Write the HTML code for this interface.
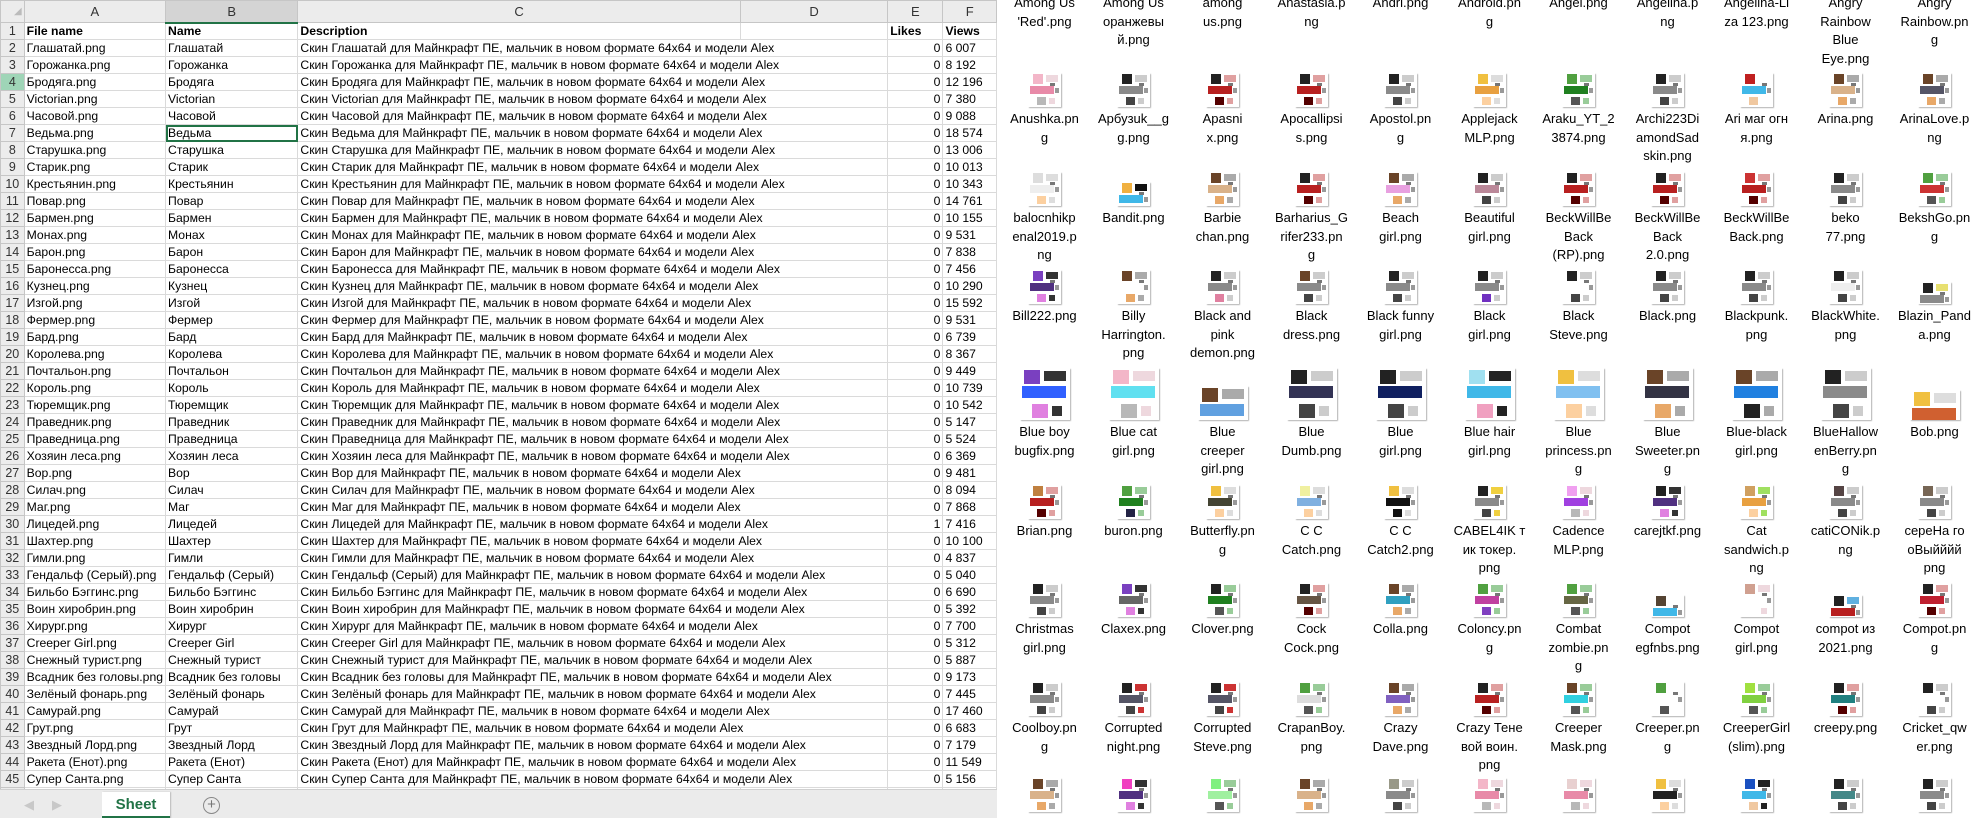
<!DOCTYPE html>
<html><head><meta charset="utf-8">
<style>
*{margin:0;padding:0;box-sizing:border-box}
body{width:1971px;height:818px;overflow:hidden;background:#fff;position:relative;font-family:"Liberation Sans","DejaVu Sans",sans-serif}
#xl{position:absolute;left:0;top:0;width:997px;height:818px;overflow:hidden;background:#fff}
table{border-collapse:collapse;table-layout:fixed;position:absolute;left:0;top:0}
td{border:1px solid #dadada;height:17px;padding:0 2px;white-space:nowrap;overflow:hidden;font-size:12.2px;line-height:15px;color:#000}
tr.h td{height:22px;background:#ececec;border-color:#c6c6c6;text-align:center;color:#333;font-size:13px}
tr.h td.sel{background:#d4d4d4;border-bottom:2px solid #217346}
td.r{background:#ececec;border-color:#c6c6c6;text-align:center;color:#333;padding:0;font-size:12.5px}
td.rs{background:#9fd5b7}
td.n{text-align:right}
tr.b td{font-weight:bold}
td.cur{outline:2px solid #217346;outline-offset:-2px}
#tabs{position:absolute;left:0;top:789px;width:997px;height:29px;background:#ebebeb;border-top:1px solid #d0d0d0}
#tab{position:absolute;left:102px;top:2px;width:68px;height:27px;background:#fff;border-bottom:3px solid #217346;color:#217346;font-weight:bold;font-size:15px;text-align:center;line-height:25px;box-shadow:1px 0 1px #bbb}
#plus{position:absolute;left:203px;top:7px;width:17px;height:17px;border:1.5px solid #888;border-radius:50%;color:#777;font-size:15px;line-height:14px;text-align:center}
.arr{position:absolute;top:7px;color:#c8c8c8;font-size:13px}
#ex{position:absolute;left:1000px;top:0;width:971px;height:818px;overflow:hidden}
.row{position:absolute;left:0;white-space:nowrap}
.cell{display:inline-block;width:89px;vertical-align:top;text-align:center;position:relative}
.ta{height:34px;position:relative}
.t{position:absolute;left:28px;bottom:0;width:33px;height:34px;box-shadow:1px 1px 1px #b5b5b5;
background:linear-gradient(var(--a),var(--a)) 5px 1px/10px 10px no-repeat,
linear-gradient(var(--d),var(--d)) 18px 2px/12px 7px no-repeat,
linear-gradient(#777,#777) 22px 10px/5px 3px no-repeat,
linear-gradient(var(--b),var(--b)) 2px 13px/24px 8px no-repeat,
linear-gradient(#999,#999) 27px 15px/4px 5px no-repeat,
linear-gradient(var(--c),var(--c)) 9px 24px/9px 8px no-repeat,
linear-gradient(var(--d),var(--d)) 21px 25px/6px 6px no-repeat,#fff}
.big .ta{height:53px}
.big .t{width:50px;height:52px;left:20px;
background:linear-gradient(var(--a),var(--a)) 4px 2px/16px 14px no-repeat,
linear-gradient(var(--d),var(--d)) 24px 3px/22px 10px no-repeat,
linear-gradient(var(--b),var(--b)) 2px 18px/44px 12px no-repeat,
linear-gradient(var(--c),var(--c)) 12px 36px/16px 14px no-repeat,
linear-gradient(var(--d),var(--d)) 32px 38px/10px 10px no-repeat,#fff}
.tx{font-size:13px;line-height:18.7px;color:#000;margin-top:3px}
.c1{--a:#f3b6c8;--b:#e88aa8;--c:#b8b8b8;--d:#eed8de}
.c2{--a:#222;--b:#8a8a8a;--c:#444;--d:#ccc}
.c3{--a:#6a4428;--b:#d9b28a;--c:#e8a868;--d:#aaa}
.c4{--a:#222;--b:#b82020;--c:#500;--d:#e0a0a0}
.c5{--a:#1a50c0;--b:#40b8e8;--c:#f0c8a0;--d:#222}
.c6{--a:#50a040;--b:#208020;--c:#555;--d:#9c9}
.c7{--a:#7a40c0;--b:#503080;--c:#e080e0;--d:#333}
.c8{--a:#f0c040;--b:#e8a040;--c:#fcd0a0;--d:#ddd}
</style></head><body>
<div id="xl">
<table>
<colgroup><col style="width:24px"><col style="width:138px"><col style="width:133px"><col style="width:444px"><col style="width:148px"><col style="width:56px"><col style="width:54px"></colgroup>
<tr class="h"><td style="color:#bbb;font-size:10px;text-align:right">◢</td><td>A</td><td class="sel">B</td><td>C</td><td>D</td><td>E</td><td>F</td></tr>
<tr class="b"><td class="r" style="font-weight:normal">1</td><td>File name</td><td>Name</td><td>Description</td><td></td><td>Likes</td><td>Views</td></tr>
<tr><td class="r">2</td><td>Глашатай.png</td><td>Глашатай</td><td colspan="2">Скин Глашатай для Майнкрафт ПЕ, мальчик в новом формате 64x64 и модели Alex</td><td class="n">0</td><td>6 007</td></tr>
<tr><td class="r">3</td><td>Горожанка.png</td><td>Горожанка</td><td colspan="2">Скин Горожанка для Майнкрафт ПЕ, мальчик в новом формате 64x64 и модели Alex</td><td class="n">0</td><td>8 192</td></tr>
<tr><td class="r rs">4</td><td>Бродяга.png</td><td>Бродяга</td><td colspan="2">Скин Бродяга для Майнкрафт ПЕ, мальчик в новом формате 64x64 и модели Alex</td><td class="n">0</td><td>12 196</td></tr>
<tr><td class="r">5</td><td>Victorian.png</td><td>Victorian</td><td colspan="2">Скин Victorian для Майнкрафт ПЕ, мальчик в новом формате 64x64 и модели Alex</td><td class="n">0</td><td>7 380</td></tr>
<tr><td class="r">6</td><td>Часовой.png</td><td>Часовой</td><td colspan="2">Скин Часовой для Майнкрафт ПЕ, мальчик в новом формате 64x64 и модели Alex</td><td class="n">0</td><td>9 088</td></tr>
<tr><td class="r">7</td><td>Ведьма.png</td><td class="cur">Ведьма</td><td colspan="2">Скин Ведьма для Майнкрафт ПЕ, мальчик в новом формате 64x64 и модели Alex</td><td class="n">0</td><td>18 574</td></tr>
<tr><td class="r">8</td><td>Старушка.png</td><td>Старушка</td><td colspan="2">Скин Старушка для Майнкрафт ПЕ, мальчик в новом формате 64x64 и модели Alex</td><td class="n">0</td><td>13 006</td></tr>
<tr><td class="r">9</td><td>Старик.png</td><td>Старик</td><td colspan="2">Скин Старик для Майнкрафт ПЕ, мальчик в новом формате 64x64 и модели Alex</td><td class="n">0</td><td>10 013</td></tr>
<tr><td class="r">10</td><td>Крестьянин.png</td><td>Крестьянин</td><td colspan="2">Скин Крестьянин для Майнкрафт ПЕ, мальчик в новом формате 64x64 и модели Alex</td><td class="n">0</td><td>10 343</td></tr>
<tr><td class="r">11</td><td>Повар.png</td><td>Повар</td><td colspan="2">Скин Повар для Майнкрафт ПЕ, мальчик в новом формате 64x64 и модели Alex</td><td class="n">0</td><td>14 761</td></tr>
<tr><td class="r">12</td><td>Бармен.png</td><td>Бармен</td><td colspan="2">Скин Бармен для Майнкрафт ПЕ, мальчик в новом формате 64x64 и модели Alex</td><td class="n">0</td><td>10 155</td></tr>
<tr><td class="r">13</td><td>Монах.png</td><td>Монах</td><td colspan="2">Скин Монах для Майнкрафт ПЕ, мальчик в новом формате 64x64 и модели Alex</td><td class="n">0</td><td>9 531</td></tr>
<tr><td class="r">14</td><td>Барон.png</td><td>Барон</td><td colspan="2">Скин Барон для Майнкрафт ПЕ, мальчик в новом формате 64x64 и модели Alex</td><td class="n">0</td><td>7 838</td></tr>
<tr><td class="r">15</td><td>Баронесса.png</td><td>Баронесса</td><td colspan="2">Скин Баронесса для Майнкрафт ПЕ, мальчик в новом формате 64x64 и модели Alex</td><td class="n">0</td><td>7 456</td></tr>
<tr><td class="r">16</td><td>Кузнец.png</td><td>Кузнец</td><td colspan="2">Скин Кузнец для Майнкрафт ПЕ, мальчик в новом формате 64x64 и модели Alex</td><td class="n">0</td><td>10 290</td></tr>
<tr><td class="r">17</td><td>Изгой.png</td><td>Изгой</td><td colspan="2">Скин Изгой для Майнкрафт ПЕ, мальчик в новом формате 64x64 и модели Alex</td><td class="n">0</td><td>15 592</td></tr>
<tr><td class="r">18</td><td>Фермер.png</td><td>Фермер</td><td colspan="2">Скин Фермер для Майнкрафт ПЕ, мальчик в новом формате 64x64 и модели Alex</td><td class="n">0</td><td>9 531</td></tr>
<tr><td class="r">19</td><td>Бард.png</td><td>Бард</td><td colspan="2">Скин Бард для Майнкрафт ПЕ, мальчик в новом формате 64x64 и модели Alex</td><td class="n">0</td><td>6 739</td></tr>
<tr><td class="r">20</td><td>Королева.png</td><td>Королева</td><td colspan="2">Скин Королева для Майнкрафт ПЕ, мальчик в новом формате 64x64 и модели Alex</td><td class="n">0</td><td>8 367</td></tr>
<tr><td class="r">21</td><td>Почтальон.png</td><td>Почтальон</td><td colspan="2">Скин Почтальон для Майнкрафт ПЕ, мальчик в новом формате 64x64 и модели Alex</td><td class="n">0</td><td>9 449</td></tr>
<tr><td class="r">22</td><td>Король.png</td><td>Король</td><td colspan="2">Скин Король для Майнкрафт ПЕ, мальчик в новом формате 64x64 и модели Alex</td><td class="n">0</td><td>10 739</td></tr>
<tr><td class="r">23</td><td>Тюремщик.png</td><td>Тюремщик</td><td colspan="2">Скин Тюремщик для Майнкрафт ПЕ, мальчик в новом формате 64x64 и модели Alex</td><td class="n">0</td><td>10 542</td></tr>
<tr><td class="r">24</td><td>Праведник.png</td><td>Праведник</td><td colspan="2">Скин Праведник для Майнкрафт ПЕ, мальчик в новом формате 64x64 и модели Alex</td><td class="n">0</td><td>5 147</td></tr>
<tr><td class="r">25</td><td>Праведница.png</td><td>Праведница</td><td colspan="2">Скин Праведница для Майнкрафт ПЕ, мальчик в новом формате 64x64 и модели Alex</td><td class="n">0</td><td>5 524</td></tr>
<tr><td class="r">26</td><td>Хозяин леса.png</td><td>Хозяин леса</td><td colspan="2">Скин Хозяин леса для Майнкрафт ПЕ, мальчик в новом формате 64x64 и модели Alex</td><td class="n">0</td><td>6 369</td></tr>
<tr><td class="r">27</td><td>Вор.png</td><td>Вор</td><td colspan="2">Скин Вор для Майнкрафт ПЕ, мальчик в новом формате 64x64 и модели Alex</td><td class="n">0</td><td>9 481</td></tr>
<tr><td class="r">28</td><td>Силач.png</td><td>Силач</td><td colspan="2">Скин Силач для Майнкрафт ПЕ, мальчик в новом формате 64x64 и модели Alex</td><td class="n">0</td><td>8 094</td></tr>
<tr><td class="r">29</td><td>Маг.png</td><td>Маг</td><td colspan="2">Скин Маг для Майнкрафт ПЕ, мальчик в новом формате 64x64 и модели Alex</td><td class="n">0</td><td>7 868</td></tr>
<tr><td class="r">30</td><td>Лицедей.png</td><td>Лицедей</td><td colspan="2">Скин Лицедей для Майнкрафт ПЕ, мальчик в новом формате 64x64 и модели Alex</td><td class="n">1</td><td>7 416</td></tr>
<tr><td class="r">31</td><td>Шахтер.png</td><td>Шахтер</td><td colspan="2">Скин Шахтер для Майнкрафт ПЕ, мальчик в новом формате 64x64 и модели Alex</td><td class="n">0</td><td>10 100</td></tr>
<tr><td class="r">32</td><td>Гимли.png</td><td>Гимли</td><td colspan="2">Скин Гимли для Майнкрафт ПЕ, мальчик в новом формате 64x64 и модели Alex</td><td class="n">0</td><td>4 837</td></tr>
<tr><td class="r">33</td><td>Гендальф (Серый).png</td><td>Гендальф (Серый)</td><td colspan="2">Скин Гендальф (Серый) для Майнкрафт ПЕ, мальчик в новом формате 64x64 и модели Alex</td><td class="n">0</td><td>5 040</td></tr>
<tr><td class="r">34</td><td>Бильбо Бэггинс.png</td><td>Бильбо Бэггинс</td><td colspan="2">Скин Бильбо Бэггинс для Майнкрафт ПЕ, мальчик в новом формате 64x64 и модели Alex</td><td class="n">0</td><td>6 690</td></tr>
<tr><td class="r">35</td><td>Воин хиробрин.png</td><td>Воин хиробрин</td><td colspan="2">Скин Воин хиробрин для Майнкрафт ПЕ, мальчик в новом формате 64x64 и модели Alex</td><td class="n">0</td><td>5 392</td></tr>
<tr><td class="r">36</td><td>Хирург.png</td><td>Хирург</td><td colspan="2">Скин Хирург для Майнкрафт ПЕ, мальчик в новом формате 64x64 и модели Alex</td><td class="n">0</td><td>7 700</td></tr>
<tr><td class="r">37</td><td>Creeper Girl.png</td><td>Creeper Girl</td><td colspan="2">Скин Creeper Girl для Майнкрафт ПЕ, мальчик в новом формате 64x64 и модели Alex</td><td class="n">0</td><td>5 312</td></tr>
<tr><td class="r">38</td><td>Снежный турист.png</td><td>Снежный турист</td><td colspan="2">Скин Снежный турист для Майнкрафт ПЕ, мальчик в новом формате 64x64 и модели Alex</td><td class="n">0</td><td>5 887</td></tr>
<tr><td class="r">39</td><td>Всадник без головы.png</td><td>Всадник без головы</td><td colspan="2">Скин Всадник без головы для Майнкрафт ПЕ, мальчик в новом формате 64x64 и модели Alex</td><td class="n">0</td><td>9 173</td></tr>
<tr><td class="r">40</td><td>Зелёный фонарь.png</td><td>Зелёный фонарь</td><td colspan="2">Скин Зелёный фонарь для Майнкрафт ПЕ, мальчик в новом формате 64x64 и модели Alex</td><td class="n">0</td><td>7 445</td></tr>
<tr><td class="r">41</td><td>Самурай.png</td><td>Самурай</td><td colspan="2">Скин Самурай для Майнкрафт ПЕ, мальчик в новом формате 64x64 и модели Alex</td><td class="n">0</td><td>17 460</td></tr>
<tr><td class="r">42</td><td>Грут.png</td><td>Грут</td><td colspan="2">Скин Грут для Майнкрафт ПЕ, мальчик в новом формате 64x64 и модели Alex</td><td class="n">0</td><td>6 683</td></tr>
<tr><td class="r">43</td><td>Звездный Лорд.png</td><td>Звездный Лорд</td><td colspan="2">Скин Звездный Лорд для Майнкрафт ПЕ, мальчик в новом формате 64x64 и модели Alex</td><td class="n">0</td><td>7 179</td></tr>
<tr><td class="r">44</td><td>Ракета (Енот).png</td><td>Ракета (Енот)</td><td colspan="2">Скин Ракета (Енот) для Майнкрафт ПЕ, мальчик в новом формате 64x64 и модели Alex</td><td class="n">0</td><td>11 549</td></tr>
<tr><td class="r">45</td><td>Супер Санта.png</td><td>Супер Санта</td><td colspan="2">Скин Супер Санта для Майнкрафт ПЕ, мальчик в новом формате 64x64 и модели Alex</td><td class="n">0</td><td>5 156</td></tr>
<tr><td class="r"></td><td></td><td></td><td></td><td></td><td></td><td></td></tr>
</table>
<div id="tabs"><span class="arr" style="left:24px">◀</span><span class="arr" style="left:52px">▶</span><div id="tab">Sheet</div><div id="plus">+</div></div>
</div>

<div id="ex">
<div class="row" style="top:-43px">
<div class="cell"><div class="ta"></div><div class="tx">Among Us<br>'Red'.png</div></div><div class="cell"><div class="ta"></div><div class="tx">Among Us<br>оранжевы<br>й.png</div></div><div class="cell"><div class="ta"></div><div class="tx">among<br>us.png</div></div><div class="cell"><div class="ta"></div><div class="tx">Anastasia.p<br>ng</div></div><div class="cell"><div class="ta"></div><div class="tx">Andri.png</div></div><div class="cell"><div class="ta"></div><div class="tx">Android.pn<br>g</div></div><div class="cell"><div class="ta"></div><div class="tx">Angel.png</div></div><div class="cell"><div class="ta"></div><div class="tx">Angelina.p<br>ng</div></div><div class="cell"><div class="ta"></div><div class="tx">Angelina-Li<br>za 123.png</div></div><div class="cell"><div class="ta"></div><div class="tx">Angry<br>Rainbow<br>Blue<br>Eye.png</div></div><div class="cell"><div class="ta"></div><div class="tx">Angry<br>Rainbow.pn<br>g</div></div>
</div>
<div class="row" style="top:73px">
<div class="cell"><div class="ta"><div class="t c1"></div></div><div class="tx">Anushka.pn<br>g</div></div><div class="cell"><div class="ta"><div class="t c2"></div></div><div class="tx">Арбузuk__g<br>g.png</div></div><div class="cell"><div class="ta"><div class="t c4"></div></div><div class="tx">Apasni<br>x.png</div></div><div class="cell"><div class="ta"><div class="t c4"></div></div><div class="tx">Apocallipsi<br>s.png</div></div><div class="cell"><div class="ta"><div class="t c2"></div></div><div class="tx">Apostol.pn<br>g</div></div><div class="cell"><div class="ta"><div class="t c8"></div></div><div class="tx">Applejack<br>MLP.png</div></div><div class="cell"><div class="ta"><div class="t c6"></div></div><div class="tx">Araku_YT_2<br>3874.png</div></div><div class="cell"><div class="ta"><div class="t c2"></div></div><div class="tx">Archi223Di<br>amondSad<br>skin.png</div></div><div class="cell"><div class="ta"><div class="t c5" style="--a:#c02020;--d:#fff"></div></div><div class="tx">Ari маг огн<br>я.png</div></div><div class="cell"><div class="ta"><div class="t c3"></div></div><div class="tx">Arina.png</div></div><div class="cell"><div class="ta"><div class="t c3" style="--b:#556"></div></div><div class="tx">ArinaLove.p<br>ng</div></div>
</div>
<div class="row" style="top:172px">
<div class="cell"><div class="ta"><div class="t c8" style="--a:#ddd;--b:#eee"></div></div><div class="tx">balocnhikp<br>enal2019.p<br>ng</div></div><div class="cell"><div class="ta"><div class="t c5" style="--a:#f0b040;--d:#111;height:24px"></div></div><div class="tx">Bandit.png</div></div><div class="cell"><div class="ta"><div class="t c3"></div></div><div class="tx">Barbie<br>chan.png</div></div><div class="cell"><div class="ta"><div class="t c4"></div></div><div class="tx">Barharius_G<br>rifer233.pn<br>g</div></div><div class="cell"><div class="ta"><div class="t c3" style="--b:#e8a0e0"></div></div><div class="tx">Beach<br>girl.png</div></div><div class="cell"><div class="ta"><div class="t c2" style="--b:#b89"></div></div><div class="tx">Beautiful<br>girl.png</div></div><div class="cell"><div class="ta"><div class="t c4"></div></div><div class="tx">BeckWillBe<br>Back<br>(RP).png</div></div><div class="cell"><div class="ta"><div class="t c4"></div></div><div class="tx">BeckWillBe<br>Back<br>2.0.png</div></div><div class="cell"><div class="ta"><div class="t c4" style="--a:#c33"></div></div><div class="tx">BeckWillBe<br>Back.png</div></div><div class="cell"><div class="ta"><div class="t c2"></div></div><div class="tx">beko<br>77.png</div></div><div class="cell"><div class="ta"><div class="t c6" style="--b:#c33"></div></div><div class="tx">BekshGo.pn<br>g</div></div>
</div>
<div class="row" style="top:270px">
<div class="cell"><div class="ta"><div class="t c7"></div></div><div class="tx">Bill222.png</div></div><div class="cell"><div class="ta"><div class="t c3" style="--b:#fff"></div></div><div class="tx">Billy<br>Harrington.<br>png</div></div><div class="cell"><div class="ta"><div class="t c2" style="--c:#e080a0"></div></div><div class="tx">Black and<br>pink<br>demon.png</div></div><div class="cell"><div class="ta"><div class="t c2" style="--a:#6a4428"></div></div><div class="tx">Black<br>dress.png</div></div><div class="cell"><div class="ta"><div class="t c2"></div></div><div class="tx">Black funny<br>girl.png</div></div><div class="cell"><div class="ta"><div class="t c2" style="--c:#7030c0"></div></div><div class="tx">Black<br>girl.png</div></div><div class="cell"><div class="ta"><div class="t c2" style="--b:#fff"></div></div><div class="tx">Black<br>Steve.png</div></div><div class="cell"><div class="ta"><div class="t c2"></div></div><div class="tx">Black.png</div></div><div class="cell"><div class="ta"><div class="t c2"></div></div><div class="tx">Blackpunk.<br>png</div></div><div class="cell"><div class="ta"><div class="t c2" style="--b:#eee"></div></div><div class="tx">BlackWhite.<br>png</div></div><div class="cell"><div class="ta"><div class="t c2" style="--d:#e8e070;height:22px"></div></div><div class="tx">Blazin_Pand<br>a.png</div></div>
</div>
<div class="row big" style="top:367px">
<div class="cell"><div class="ta"><div class="t c7" style="--b:#3060ff"></div></div><div class="tx">Blue boy<br>bugfix.png</div></div><div class="cell"><div class="ta"><div class="t c1" style="--b:#60e0f0"></div></div><div class="tx">Blue cat<br>girl.png</div></div><div class="cell"><div class="ta"><div class="t c3" style="--b:#60a0e0;height:34px"></div></div><div class="tx">Blue<br>creeper<br>girl.png</div></div><div class="cell"><div class="ta"><div class="t c2" style="--b:#335"></div></div><div class="tx">Blue<br>Dumb.png</div></div><div class="cell"><div class="ta"><div class="t c2" style="--b:#102060"></div></div><div class="tx">Blue<br>girl.png</div></div><div class="cell"><div class="ta"><div class="t c5" style="--a:#a0e0f0;--c:#f0a0c0"></div></div><div class="tx">Blue hair<br>girl.png</div></div><div class="cell"><div class="ta"><div class="t c8" style="--b:#80c0f0"></div></div><div class="tx">Blue<br>princess.pn<br>g</div></div><div class="cell"><div class="ta"><div class="t c3" style="--b:#334"></div></div><div class="tx">Blue<br>Sweeter.pn<br>g</div></div><div class="cell"><div class="ta"><div class="t c3" style="--b:#2080e0;--c:#222"></div></div><div class="tx">Blue-black<br>girl.png</div></div><div class="cell"><div class="ta"><div class="t c2"></div></div><div class="tx">BlueHallow<br>enBerry.pn<br>g</div></div><div class="cell"><div class="ta"><div class="t c8" style="--b:#d06030;--c:#3080d0;height:30px"></div></div><div class="tx">Bob.png</div></div>
</div>
<div class="row" style="top:485px">
<div class="cell"><div class="ta"><div class="t c4" style="--a:#c08040"></div></div><div class="tx">Brian.png</div></div><div class="cell"><div class="ta"><div class="t c6" style="--c:#224"></div></div><div class="tx">buron.png</div></div><div class="cell"><div class="ta"><div class="t c8" style="--b:#443"></div></div><div class="tx">Butterfly.pn<br>g</div></div><div class="cell"><div class="ta"><div class="t c8" style="--a:#f0f0a0;--b:#80b0e0"></div></div><div class="tx">C C<br>Catch.png</div></div><div class="cell"><div class="ta"><div class="t c8" style="--b:#111;--c:#111"></div></div><div class="tx">C C<br>Catch2.png</div></div><div class="cell"><div class="ta"><div class="t c2" style="--d:#f0d040"></div></div><div class="tx">CABEL4IK т<br>ик токер.<br>png</div></div><div class="cell"><div class="ta"><div class="t c1" style="--a:#f0a0f0;--b:#a040e0"></div></div><div class="tx">Cadence<br>MLP.png</div></div><div class="cell"><div class="ta"><div class="t c7" style="--a:#222"></div></div><div class="tx">carejtkf.png</div></div><div class="cell"><div class="ta"><div class="t c8" style="--a:#d0a060;--d:#a0e060"></div></div><div class="tx">Cat<br>sandwich.p<br>ng</div></div><div class="cell"><div class="ta"><div class="t c2" style="--a:#544"></div></div><div class="tx">catiCONik.p<br>ng</div></div><div class="cell"><div class="ta"><div class="t c2" style="--a:#765"></div></div><div class="tx">сереНа го<br>оВыйййй<br>png</div></div>
</div>
<div class="row" style="top:583px">
<div class="cell"><div class="ta"><div class="t c2"></div></div><div class="tx">Christmas<br>girl.png</div></div><div class="cell"><div class="ta"><div class="t c7" style="--b:#666"></div></div><div class="tx">Claxex.png</div></div><div class="cell"><div class="ta"><div class="t c6" style="--a:#222"></div></div><div class="tx">Clover.png</div></div><div class="cell"><div class="ta"><div class="t c4" style="--b:#654"></div></div><div class="tx">Cock<br>Cock.png</div></div><div class="cell"><div class="ta"><div class="t c3" style="--b:#30a0c0"></div></div><div class="tx">Colla.png</div></div><div class="cell"><div class="ta"><div class="t c6" style="--b:#c040a0;--c:#8040c0"></div></div><div class="tx">Coloncy.pn<br>g</div></div><div class="cell"><div class="ta"><div class="t c6" style="--b:#664"></div></div><div class="tx">Combat<br>zombie.pn<br>g</div></div><div class="cell"><div class="ta"><div class="t c5" style="--a:#543;--d:#fff;height:22px"></div></div><div class="tx">Compot<br>egfnbs.png</div></div><div class="cell"><div class="ta"><div class="t c1" style="--a:#d0a090;--b:#fff;--c:#fff"></div></div><div class="tx">Compot<br>girl.png</div></div><div class="cell"><div class="ta"><div class="t c4" style="--d:#60b0e0;height:22px"></div></div><div class="tx">compot из<br>2021.png</div></div><div class="cell"><div class="ta"><div class="t c4" style="--b:#c02030"></div></div><div class="tx">Compot.pn<br>g</div></div>
</div>
<div class="row" style="top:682px">
<div class="cell"><div class="ta"><div class="t c2"></div></div><div class="tx">Coolboy.pn<br>g</div></div><div class="cell"><div class="ta"><div class="t c2" style="--b:#556;--d:#c33"></div></div><div class="tx">Corrupted<br>night.png</div></div><div class="cell"><div class="ta"><div class="t c2" style="--b:#556;--d:#c33"></div></div><div class="tx">Corrupted<br>Steve.png</div></div><div class="cell"><div class="ta"><div class="t c6" style="--b:#ddd"></div></div><div class="tx">CrapanBoy.<br>png</div></div><div class="cell"><div class="ta"><div class="t c3" style="--b:#8060c0"></div></div><div class="tx">Crazy<br>Dave.png</div></div><div class="cell"><div class="ta"><div class="t c4"></div></div><div class="tx">Crazy Тене<br>вой воин.<br>png</div></div><div class="cell"><div class="ta"><div class="t c6" style="--a:#6a4428;--b:#30d0e0"></div></div><div class="tx">Creeper<br>Mask.png</div></div><div class="cell"><div class="ta"><div class="t c6" style="--d:#fff;--b:#fff"></div></div><div class="tx">Creeper.pn<br>g</div></div><div class="cell"><div class="ta"><div class="t c6" style="--a:#a0e040;--b:#80d040"></div></div><div class="tx">CreeperGirl<br>(slim).png</div></div><div class="cell"><div class="ta"><div class="t c4" style="--b:#208080"></div></div><div class="tx">creepy.png</div></div><div class="cell"><div class="ta"><div class="t c2" style="--b:#fff"></div></div><div class="tx">Cricket_qw<br>er.png</div></div>
</div>
<div class="row" style="top:778px">
<div class="cell"><div class="ta"><div class="t c3"></div></div></div><div class="cell"><div class="ta"><div class="t c7" style="--a:#f040c0"></div></div></div><div class="cell"><div class="ta"><div class="t c6" style="--a:#80f080;--b:#a0f0a0"></div></div></div><div class="cell"><div class="ta"><div class="t c3"></div></div></div><div class="cell"><div class="ta"><div class="t c2" style="--a:#998"></div></div></div><div class="cell"><div class="ta"><div class="t c1"></div></div></div><div class="cell"><div class="ta"><div class="t c1" style="--a:#e8d0d0"></div></div></div><div class="cell"><div class="ta"><div class="t c8" style="--b:#222"></div></div></div><div class="cell"><div class="ta"><div class="t c5"></div></div></div><div class="cell"><div class="ta"><div class="t c2" style="--b:#488"></div></div></div><div class="cell"><div class="ta"><div class="t c2"></div></div></div>
</div>
</div>
</body></html>
